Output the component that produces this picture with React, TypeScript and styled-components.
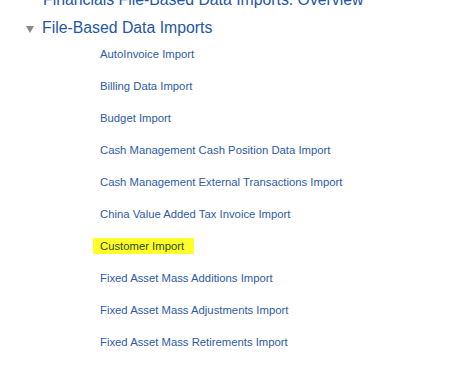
import React from 'react';
import styled, { createGlobalStyle } from 'styled-components';

const GlobalStyle = createGlobalStyle`
  html, body {
    margin: 0;
    padding: 0;
    background: #ffffff;
    overflow: hidden;
  }
  body {
    font-family: "Liberation Sans", Arial, sans-serif;
  }
`;

const Page = styled.div`
  width: 474px;
  height: 366px;
  overflow: hidden;
  position: relative;
`;

const Content = styled.div`
  margin-top: -11px;
  padding-left: 26px;
`;

const Heading = styled.div<{ $indent?: boolean }>`
  display: flex;
  align-items: center;
  gap: 8px;
  padding-left: ${p => (p.$indent ? '17px' : '0')};
  margin-top: ${p => (p.$indent ? '0' : '6px')};
  font-size: 15.8px;
  line-height: 22px;
  color: #2456a4;
`;

const Triangle = styled.span`
  display: inline-block;
  width: 0;
  height: 0;
  border-left: 4.5px solid transparent;
  border-right: 4.5px solid transparent;
  border-top: 7px solid #8a8a8a;
  margin-top: 2px;
`;

const List = styled.ul`
  list-style: none;
  margin: -1px 0 0 0;
  padding: 0 0 0 74px;
`;

const Item = styled.li`
  height: 32px;
  display: flex;
  align-items: center;
  font-size: 11.3px;
  color: #2e5ca6;
`;

const Link = styled.span<{ $marked?: boolean }>`
  background: ${p => (p.$marked ? '#ffff2a' : 'transparent')};
  color: ${p => (p.$marked ? '#2e4a0e' : 'inherit')};
  padding: ${p => (p.$marked ? '2px 10px 2px 7px' : '0')};
  margin-left: ${p => (p.$marked ? '-7px' : '0')};
`;

const items = [
  'AutoInvoice Import',
  'Billing Data Import',
  'Budget Import',
  'Cash Management Cash Position Data Import',
  'Cash Management External Transactions Import',
  'China Value Added Tax Invoice Import',
  'Customer Import',
  'Fixed Asset Mass Additions Import',
  'Fixed Asset Mass Adjustments Import',
  'Fixed Asset Mass Retirements Import',
];

export default function App() {
  return (
    <Page>
      <GlobalStyle />
      <Content>
        <Heading $indent>Financials File-Based Data Imports: Overview</Heading>
        <Heading>
          <Triangle />
          File-Based Data Imports
        </Heading>
        <List>
          {items.map(name => (
            <Item key={name}>
              <Link $marked={name === 'Customer Import'}>{name}</Link>
            </Item>
          ))}
        </List>
      </Content>
    </Page>
  );
}
